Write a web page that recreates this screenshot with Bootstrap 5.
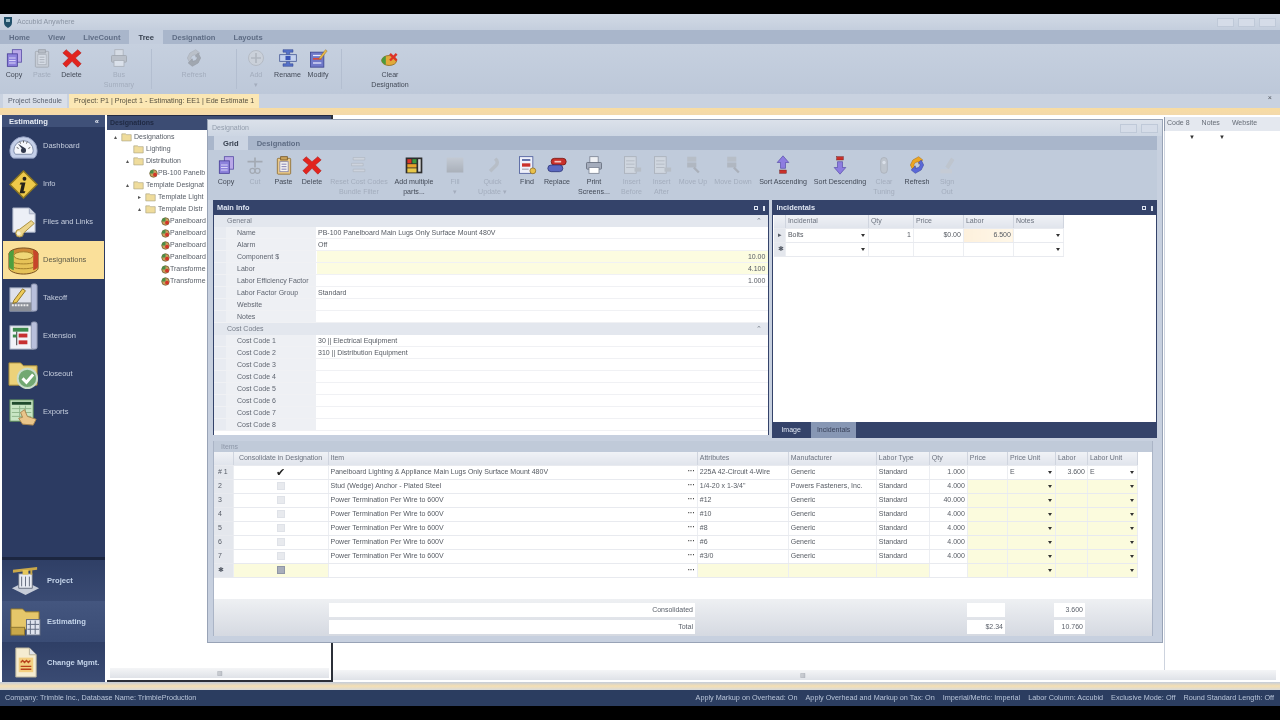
<!DOCTYPE html>
<html lang="en">
<head>
<meta charset="UTF-8">
<title>Accubid Anywhere</title>
<link href="https://cdn.jsdelivr.net/npm/bootstrap@5.3.0/dist/css/bootstrap.min.css" rel="stylesheet">
<style>
  html, body { height: 720px; overflow: hidden; background: #000; }
  body { font-family: "Liberation Sans", Arial, sans-serif; font-size: 7px; line-height: 12px; color: #51565e; }
  .app { margin-top: 14px; height: 692px; display: flex; flex-direction: column; background: #c3cddd; filter: blur(.4px); }
  .ttl-bar { height: 16px; flex: none; background: linear-gradient(#d2dae6, #c4cedd); padding-left: 3px; color: #8a94a3; }
  .ttl-bar svg { width: 10px; height: 12px; }
  .win-ctl { width: 17px; height: 9px; background: #d5dce8; border: 1px solid #bfc9d8; }
  .rb-tabs { height: 14px; flex: none; background: #a9b6cb; padding-left: 0; }
  .rb-tab { height: 14px; padding: 0 9px; font-weight: 700; font-size: 7.6px; color: #5f6d85; line-height: 15px; }
  .rb-tab.on { background: #c3cddd; color: #37404f; }
  .ribbon { height: 50px; flex: none; background: linear-gradient(#c6d0df, #bdc8d9); }
  .tb-btn { flex: none; display: flex; flex-direction: column; align-items: center; padding: 4px 0 0; border: 0; border-radius: 0; font-size: 7.1px; line-height: 9.5px; color: #434a57; text-align: center; background: none; white-space: nowrap; }
  .tb-btn svg { width: 20px; height: 20px; margin-bottom: 3px; flex: none; }
  .tb-btn.off { color: #a3adbd; }
  .tb-btn.off svg { filter: grayscale(1) opacity(.4); }
  .tb-sep { width: 1px; height: 40px; margin-top: 5px; background: #b3bed0; flex: none; }
  .w28 { width: 28px; } .w30 { width: 30px; } .w31 { width: 31px; } .w27 { width: 27px; } .w22 { width: 22px; }
  .w34 { width: 34px; } .w36 { width: 36px; } .w39 { width: 39px; } .w44 { width: 44px; } .w46 { width: 46px; }
  .w54 { width: 54px; } .w60 { width: 60px; } .w64 { width: 64px; } .w38 { width: 38px; } .w29 { width: 29px; }
  .w84 { width: 84px; } .w25 { width: 25px; } .w96 { width: 96px; }
  .tb-sep.far { margin-left: 5px; }
  .doc-tabs { height: 14px; flex: none; background: #c9d2e0; padding-left: 3px; gap: 2px; font-size: 7.15px; }
  .doc-tab { padding: 0 5px; height: 14px; line-height: 14px; background: #d9dfe9; color: #596170; }
  .doc-tab.on { background: #fbe7b4; color: #565140; }
  .band-top { height: 7px; flex: none; background: linear-gradient(#f8dca2, #f3d9ab); }
  .band-bot { height: 8px; flex: none; background: linear-gradient(#c4cddb, #f5dfb2 50%, #d8dadb); }
  .stage { position: relative; height: 567px; flex: none; display: flex; background: #fff; overflow: hidden; }
  .side { width: 103px; flex: none; margin-left: 2px; margin-right: 2px; background: #2c3b62; display: flex; flex-direction: column; color: #cfd6e4; margin-bottom: -1px; }
  .side-hd { height: 12px; flex: none; background: #3f5078; color: #e6ebf4; font-weight: 700; font-size: 7.6px; padding: 0 6px 0 7px; line-height: 13px; }
  .side-it { height: 38px; flex: none; display: flex; align-items: center; padding-left: 5px; gap: 4px; font-size: 7.5px; color: #c5cddd; margin: 0 1px; }
  .side-it svg { width: 31px; height: 31px; flex: none; }
  .side-it.on { background: #fae09a; color: #5c5a48; }
  .side-big { height: 41px; flex: none; display: flex; align-items: center; padding-left: 8px; gap: 6px; font-weight: 700; font-size: 7.6px; color: #c4d4ea; background: linear-gradient(#2f3f66, #3a4b73); }
  .side-big.on { background: linear-gradient(#44567f, #3a4c75); }
  .side-big svg { width: 31px; height: 31px; flex: none; }
  .side-sep { height: 3px; flex: none; background: #1c2640; }
  .tree-pane { width: 226px; flex: none; display: flex; flex-direction: column; border-right: 2px solid #2b2f38; border-bottom: 2px solid #2b2f38; height: 567px; }
  .tree-hd { height: 15px; flex: none; background: #3c4c73; border-top: 1px solid #232b44; color: #1f2942; font-weight: 700; padding-left: 3px; line-height: 14px; }
  .tree-body { flex: 1; padding-top: 1px; width: 100px; overflow: hidden; white-space: nowrap; }
  .tree-row { height: 12px; display: flex; align-items: center; color: #5a6069; }
  .tree-row svg { width: 11px; height: 10px; margin-right: 2px; flex: none; }
  .tree-row svg.ptc { width: 9px; height: 9px; margin-right: 0; }
  .tw { width: 7px; flex: none; font-size: 6px; color: #555; }
  .ind0 { padding-left: 7px; } .ind1 { padding-left: 19px; } .ind2 { padding-left: 31px; } .ind3 { padding-left: 35px; } .ind4 { padding-left: 47px; }
  .hscroll { height: 10px; flex: none; background: linear-gradient(#f4f5f7, #dfe2e8); margin: 0 2px 2px 3px; text-align: center; color: #8a8f99; font-size: 6px; line-height: 10px; }
  .back-grid { flex: 1; display: flex; flex-direction: column; justify-content: space-between; }
  .back-grid .hscroll { margin: 0 4px 2px 0; padding-right: 4px; }
  .back-hd { margin-left: 831px; height: 14px; margin-top: 2px; background: #e4e8ef; display: flex; color: #666c76; border-left: 1px solid #8f99ab; line-height: 12px; }
  .back-hd span { padding-left: 2px; margin-right: 10px; }
  .back-row { margin-left: 831px; flex: 1; position: relative; border-left: 1px solid #cdd3de; color: #333; font-size: 6px; }
  .back-ar { position: absolute; top: 0; }
  .ar-a { left: 24px; } .ar-b { left: 54px; }
  .dlg { position: absolute; left: 207px; top: 4px; width: 956px; height: 524px; background: #c7d0df; border: 1px solid #98a3b6; display: flex; flex-direction: column; padding-right: 5px; }
  .dlg-ttl { height: 16px; flex: none; color: #939dac; background: linear-gradient(#dbe1ea, #cdd6e3); padding-left: 4px; line-height: 15px; margin-right: -5px; }
  .dlg-tabs { height: 14px; flex: none; background: #a9b6cb; padding-left: 6px; }
  .dlg-tabs .rb-tab.on { background: #cbd4e2; color: #37404f; }
  .dlg-tb { height: 50px; flex: none; padding: 1px 0 0 4px; background: #c0cbdb; }
  .panels { height: 238px; flex: none; display: flex; gap: 3px; padding-left: 5px; }
  .pn { background: #34436a; padding: 1px 1px 0; display: flex; flex-direction: column; }
  .pn-main { width: 557px; height: 235px; }
  .pn-inc { width: 385px; height: 238px; }
  .pn-hd { height: 14px; flex: none; display: flex; align-items: center; justify-content: space-between; font-weight: 700; font-size: 7.4px; color: #dfe6f2; padding: 0 3px; }
  .pn-ctl { display: flex; gap: 5px; align-items: center; }
  .pn-ctl i { display: block; width: 4px; height: 4px; border: 1px solid #dfe6f2; }
  .pn-ctl b { display: block; width: 2px; height: 5px; background: #dfe6f2; }
  .pn-body { flex: 1; background: #fff; overflow: hidden; }
  .pg-band { height: 12px; background: #e3e7ee; color: #757c88; padding-left: 13px; display: flex; justify-content: space-between; padding-right: 6px; }
  .pg-row { display: flex; height: 12px; border-bottom: 1px solid #f0f1f4; }
  .pg-lb { width: 102px; flex: none; padding-left: 11px; border-left: 12px solid #e8ebf1; background: #eef0f4; color: #5f6570; margin-right: 1px; white-space: nowrap; }
  .pg-v { flex: 1; padding: 0 3px 0 1px; display: flex; justify-content: space-between; color: #565b63; }
  .pg-y { background: #fcfce0; }
  .inc-wrap { flex: 1; background: #fff; }
  .tab-foot { height: 16px; flex: none; display: flex; gap: 4px; color: #dfe6f2; padding-left: 2px; align-items: stretch; line-height: 16px; }
  .tab-foot span { padding: 0 6px; }
  .tab-foot .on { background: #8797b4; color: #39425a; }
  .gt { table-layout: fixed; border-collapse: collapse; margin: 0; width: auto; }
  .gt th, .gt td { padding: 0 2px; height: 14px; font-weight: 400; color: #565b63; font-size: 7px; line-height: 12px; border: 0; border-right: 1px solid #eceef2; border-bottom: 1px solid #e8eaef; white-space: nowrap; overflow: hidden; vertical-align: middle; }
  .gt th { height: 13px; background: linear-gradient(#f0f2f6, #e0e4ec); color: #6d7480; border-right-color: #d0d5df; }
  .gt td.rh { background: #e4e7ed; color: #555b66; padding-left: 4px; }
  .gt td.yl { background: #fbfbdd; }
  .gt td.num { text-align: right; }
  .gt td.drop { position: relative; }
  .gt td.drop::after { content: ""; position: absolute; right: 3px; top: 5px; border: 2.5px solid transparent; border-top: 3px solid #333; border-bottom: 0; }
  .dots { float: right; font-weight: 700; color: #444; line-height: 10px; }
  .inc-tb { width: 289px; margin-left: 1px; }
  .inc-tb col:nth-child(1) { width: 11px; } .inc-tb col:nth-child(2) { width: 83px; }
  .inc-tb col:nth-child(3) { width: 45px; } .inc-tb col:nth-child(4) { width: 50px; }
  .inc-tb col:nth-child(5) { width: 50px; } .inc-tb col:nth-child(6) { width: 50px; }
  .gt td.lab-hot { background: linear-gradient(90deg, #fdf0dc, #fff7e8); }
  .items { flex: 1; margin: 3px 4px 6px 5px; display: flex; flex-direction: column; background: #fff; border: 1px solid #aab4c6; border-top: 0; border-bottom: 0; }
  .items-hd { height: 11px; flex: none; background: #c0cad9; color: #8d97a8; padding-left: 7px; line-height: 11px; }
  .it-tb { width: 924px; }
  .it-tb col:nth-child(1) { width: 19px; } .it-tb col:nth-child(2) { width: 95px; } .it-tb col:nth-child(3) { width: 369px; }
  .it-tb col:nth-child(4) { width: 91px; } .it-tb col:nth-child(5) { width: 88px; } .it-tb col:nth-child(6) { width: 53px; }
  .it-tb col:nth-child(7) { width: 38px; } .it-tb col:nth-child(8) { width: 40px; } .it-tb col:nth-child(9) { width: 48px; }
  .it-tb col:nth-child(10) { width: 32px; } .it-tb col:nth-child(11) { width: 50px; }
  .cbx { display: block; width: 8px; height: 8px; margin: 0 auto; background: #e8eaee; border: 1px solid #dfe2e8; }
  .cbx.dark { background: #a8aebb; border-color: #8f96a6; }
  .gt td.chk { text-align: center; color: #222; font-size: 11px; line-height: 11px; }
  .grid-gap { flex: 1; }
  .sumry { height: 37px; flex: none; background: linear-gradient(#eef0f3, #d5d9e1); padding-top: 4px; display: flex; flex-direction: column; gap: 3px; }
  .sum-row { height: 14px; display: flex; color: #5b616b; }
  .sum-lbl { margin-left: 115px; width: 366px; background: #fff; text-align: right; padding-right: 2px; line-height: 14px; }
  .sum-pr { margin-left: 272px; width: 38px; background: #fff; text-align: right; padding-right: 2px; line-height: 14px; }
  .sum-lb { margin-left: 49px; width: 31px; background: #fff; text-align: right; padding-right: 2px; line-height: 14px; }
  .status { height: 16px; flex: none; background: #2b3d60; color: #b8c4d8; padding: 0 6px 0 5px; line-height: 15px; font-size: 7.25px; }
  .status-r { gap: 8px; }
</style>
</head>
<body>
<svg width="0" height="0" class="position-absolute">
  <symbol id="i-copy" viewBox="0 0 24 24"><rect x="10" y="2" width="11" height="15" fill="#b9a8e8" stroke="#5b50a8"/><rect x="4" y="7" width="12" height="15" fill="#8d82dc" stroke="#483f98"/><path d="M6 12h8M6 15h8M6 18h8" stroke="#e8e4ff"/></symbol>
  <symbol id="i-paste" viewBox="0 0 24 24"><rect x="4" y="4" width="16" height="19" rx="1" fill="#e9c98a" stroke="#8c6a30"/><rect x="8" y="2" width="8" height="4" fill="#c9a25a" stroke="#7a5a28"/><rect x="7" y="8" width="10" height="12" fill="#f6f4f0" stroke="#8886a8"/><path d="M9 11h6M9 14h6M9 17h6" stroke="#6a68a8"/></symbol>
  <symbol id="i-del" viewBox="0 0 24 24"><path d="M5 2l7 6 7-6 4 4-7 6 7 7-4 4-7-7-7 7-4-4 7-7-7-6z" fill="#e2241e" stroke="#a81612" stroke-width=".6"/></symbol>
  <symbol id="i-print" viewBox="0 0 24 24"><rect x="7" y="2" width="10" height="8" fill="#eef0f4" stroke="#7c8494"/><rect x="3" y="9" width="18" height="8" rx="1" fill="#a4acbc" stroke="#646c7c"/><rect x="6" y="15" width="12" height="7" fill="#fff" stroke="#7c8494"/></symbol>
  <symbol id="i-refresh" viewBox="0 0 24 24"><path d="M14 2L7 6l-3 6 3 6 3-3-2-3 2-3 4-1v3l5-5z" fill="#eda520" stroke="#a86c10" stroke-width=".6"/><path d="M10 22l7-4 3-6-3-6-3 3 2 3-2 3-4 1v-3l-5 5z" fill="#5a68d8" stroke="#333f98" stroke-width=".6"/></symbol>
  <symbol id="i-add" viewBox="0 0 24 24"><circle cx="12" cy="12" r="9" fill="#d0d4dc" stroke="#8d94a2"/><path d="M12 6v12M6 12h12" stroke="#8d94a2" stroke-width="2"/></symbol>
  <symbol id="i-rename" viewBox="0 0 24 24"><path d="M6 2h12v3h-4v14h4v3H6v-3h4V5H6z" fill="#5571c8" stroke="#2d3f8a" stroke-width=".6"/><rect x="2" y="8" width="20" height="8" fill="#c4d2ee" stroke="#4a5c98"/><rect x="9" y="9.5" width="6" height="5" fill="#3a55b8"/></symbol>
  <symbol id="i-modify" viewBox="0 0 24 24"><rect x="3" y="5" width="16" height="18" fill="#6f78c8" stroke="#3d4590"/><path d="M6 9h10" stroke="#e8eaff" stroke-width="1.5"/><path d="M6 13h10" stroke="#d84a3a" stroke-width="2"/><path d="M6 18h10" stroke="#e8eaff" stroke-width="1.5"/><path d="M14 11l7-9 2 1.5-7 9-3 1z" fill="#e9b84a" stroke="#8a6a20" stroke-width=".5"/></symbol>
  <symbol id="i-clear" viewBox="0 0 24 24"><ellipse cx="11" cy="15" rx="9" ry="6" fill="#e2a93a" stroke="#8c6a20"/><path d="M2 15c0-3 3-5 5-5v10c-3-1-5-3-5-5z" fill="#4c9a3c"/><path d="M13 6l3 3 3-3 2 2-3 3 3 3-2 2-3-3-3 3-2-2 3-3-3-3z" fill="#dd3328"/></symbol>
  <symbol id="i-cut" viewBox="0 0 24 24"><path d="M12 3v12M3 8h18" stroke="#777" stroke-width="2"/><circle cx="9" cy="19" r="3" fill="none" stroke="#777" stroke-width="1.5"/><circle cx="15" cy="19" r="3" fill="none" stroke="#777" stroke-width="1.5"/></symbol>
  <symbol id="i-reset" viewBox="0 0 24 24"><path d="M5 3h14v3H5zM3 10h14v3H3zM5 17h14v3H5z" fill="#dde0e6" stroke="#777" stroke-width=".5"/></symbol>
  <symbol id="i-parts" viewBox="0 0 24 24"><rect x="2" y="3" width="20" height="19" fill="#2d2d2d"/><rect x="4" y="5" width="5" height="5" fill="#d9342a"/><rect x="10" y="5" width="5" height="5" fill="#3d9a3d"/><rect x="4" y="11" width="11" height="4" fill="#e8a42a"/><rect x="4" y="16" width="11" height="5" fill="#e8c84a"/><rect x="17" y="5" width="3" height="15" fill="#d8d8d8"/></symbol>
  <symbol id="i-fill" viewBox="0 0 24 24"><defs><linearGradient id="gf" x1="0" y1="0" x2="0" y2="1"><stop offset="0" stop-color="#c6c8cc"/><stop offset="1" stop-color="#84888e"/></linearGradient></defs><rect x="2" y="3" width="20" height="18" fill="url(#gf)"/></symbol>
  <symbol id="i-quick" viewBox="0 0 24 24"><path d="M16 3a7 7 0 0 1 1 11l-7 7-3-3 7-7a3 3 0 0 0-1-5z" fill="#aaa"/></symbol>
  <symbol id="i-find" viewBox="0 0 24 24"><rect x="3" y="2" width="16" height="20" fill="#eef0fa" stroke="#4a5a9a"/><path d="M6 6h10" stroke="#4a5a9a" stroke-width="2"/><rect x="6" y="10" width="10" height="4" fill="#c9302a"/><path d="M6 17h8" stroke="#889"/><circle cx="19" cy="19" r="3.5" fill="#e8c04a" stroke="#96752a"/></symbol>
  <symbol id="i-replace" viewBox="0 0 24 24"><rect x="5" y="4" width="18" height="8" rx="4" fill="#c9302a" stroke="#7a1a16"/><rect x="1" y="12" width="18" height="8" rx="4" fill="#5a68c0" stroke="#30387c"/><rect x="9" y="7" width="8" height="2" fill="#f4c4c0"/></symbol>
  <symbol id="i-ins" viewBox="0 0 24 24"><rect x="3" y="2" width="14" height="20" fill="#e6e6e0" stroke="#888"/><path d="M5 7h10M5 11h10M5 15h10" stroke="#999"/><path d="M15 15h8v5h-8z" fill="#aaa"/></symbol>
  <symbol id="i-move" viewBox="0 0 24 24"><rect x="5" y="2" width="11" height="6" fill="#aaa"/><rect x="5" y="9" width="11" height="6" fill="#999"/><path d="M14 14l6 6-2 2-6-6z" fill="#888"/></symbol>
  <symbol id="i-asc" viewBox="0 0 24 24"><path d="M12 1l7 8h-4v7H9V9H5z" fill="#8d7de0" stroke="#4a3fa0" stroke-width=".7"/><rect x="8" y="18" width="8" height="4" fill="#c9302a" stroke="#6a1a18" stroke-width=".5"/></symbol>
  <symbol id="i-desc" viewBox="0 0 24 24"><path d="M12 23l7-8h-4V8H9v7H5z" fill="#8d7de0" stroke="#4a3fa0" stroke-width=".7"/><rect x="8" y="2" width="8" height="4" fill="#c9302a" stroke="#6a1a18" stroke-width=".5"/></symbol>
  <symbol id="i-tune" viewBox="0 0 24 24"><rect x="8" y="3" width="8" height="19" rx="4" fill="#bbb" stroke="#888"/><circle cx="12" cy="9" r="2" fill="#fff"/></symbol>
  <symbol id="i-sign" viewBox="0 0 24 24"><path d="M10 14l7-11 4 3-7 11z" fill="#bbb"/><rect x="4" y="17" width="14" height="5" fill="#ccc"/></symbol>
  <symbol id="i-dash" viewBox="0 0 32 32"><path d="M2 20a14 14 0 0 1 28 0c0 5-2 8-4 8H6c-2 0-4-3-4-8z" fill="#c4cfe8" stroke="#8e9bbd"/><path d="M6 20a10 10 0 0 1 20 0c0 2-1 4-2 4H8c-1 0-2-2-2-4z" fill="#f4f6fb" stroke="#7d8aa8"/><path d="M16 20l-6-7 8 5z" fill="#30384c"/><circle cx="16" cy="20" r="2.6" fill="#30384c"/><path d="M9 17l2 1M16 10v2M23 17l-2 1M12 11l1 2M20 11l-1 2" stroke="#555"/></symbol>
  <symbol id="i-info" viewBox="0 0 32 32"><path d="M16 2l14 14-14 14L2 16z" fill="#eec94a" stroke="#8a7520" stroke-width="1.5"/><path d="M17 8a2 2 0 1 1 0 4 2 2 0 0 1 0-4zM13 14h5l-2 9h2l-1 2h-5l2-9h-2z" fill="#26221a"/></symbol>
  <symbol id="i-files" viewBox="0 0 32 32"><path d="M5 1h17l6 6v19H5z" fill="#eceff6" stroke="#a8b1c4"/><path d="M22 1v6h6" fill="#cfd6e4" stroke="#a8b1c4"/><path d="M24 14l-12 9a4 4 0 1 0 4 4l11-10z" fill="#ecd58c" stroke="#a78d3e"/><circle cx="11" cy="27" r="2" fill="#f6f1d8"/></symbol>
  <symbol id="i-desig" viewBox="0 0 32 32"><ellipse cx="16" cy="9" rx="15" ry="6" fill="#cf8a38" stroke="#74491a"/><path d="M1 9v15c0 3 7 6 15 6s15-3 15-6V9" fill="#e6c258" stroke="#74491a"/><path d="M1 9c0-2 3-3 5-4v21c-3-1-5-2-5-4z" fill="#4f9f3f"/><path d="M31 9c0-2-3-3-5-4v21c3-1 5-2 5-4z" fill="#c6452a"/><ellipse cx="16" cy="11" rx="10" ry="4" fill="#f0d878" stroke="#a37e2a"/><path d="M6 18c2 2 18 2 20 0M6 23c2 2 18 2 20 0" stroke="#a37e2a" fill="none"/></symbol>
  <symbol id="i-takeoff" viewBox="0 0 32 32"><rect x="2" y="5" width="24" height="24" fill="#dfe2ec" stroke="#9ca5bb"/><rect x="24" y="1" width="6" height="28" rx="2" fill="#b8bfdb" stroke="#8f97b0"/><path d="M2 20h22v9H2z" fill="#8b8f98"/><path d="M4 23h18" stroke="#eee" stroke-dasharray="2 1" stroke-width="2"/><path d="M6 18l9-12 3 2-9 12-4 1z" fill="#eecb5a" stroke="#8c7324"/></symbol>
  <symbol id="i-ext" viewBox="0 0 32 32"><rect x="2" y="5" width="24" height="24" fill="#f2f3f7" stroke="#9ca5bb"/><rect x="24" y="1" width="6" height="28" rx="2" fill="#b8bfdb" stroke="#8f97b0"/><rect x="5" y="7" width="16" height="4" fill="#3d8a4c"/><path d="M9 11v14" stroke="#333"/><rect x="11" y="13" width="9" height="4" fill="#c73030"/><rect x="11" y="20" width="9" height="4" fill="#c73030"/><rect x="5" y="14" width="4" height="3" fill="#3d8a4c"/></symbol>
  <symbol id="i-close" viewBox="0 0 32 32"><path d="M1 4h12l3 3h14v20H1z" fill="#ecd27a" stroke="#a88d3a"/><circle cx="20" cy="20" r="10" fill="#72a872" stroke="#c9dcc9" stroke-width="2"/><path d="M15 20l4 4 7-8" stroke="#fff" stroke-width="3" fill="none"/></symbol>
  <symbol id="i-export" viewBox="0 0 32 32"><rect x="2" y="3" width="24" height="22" fill="#c9e6c4" stroke="#5b8a58"/><rect x="4" y="5" width="20" height="3" fill="#1f4a2c"/><path d="M4 12h20M4 16h20M4 20h20M12 9v15M18 9v15" stroke="#8fb58b"/><path d="M13 16l4-3 3 7 9 3-3 6-11-1-4-6 4-1z" fill="#eac58a" stroke="#a88550"/></symbol>
  <symbol id="i-proj" viewBox="0 0 32 32"><path d="M2 24l14-7 14 7-14 7z" fill="#c6ccd8"/><path d="M9 9h14v15H9z" fill="#e8ebf2" stroke="#646c7e"/><path d="M12 12v10M16 12v10M20 12v10" stroke="#646c7e"/><path d="M3 5l25-3v3L3 8z" fill="#c9a84a"/><path d="M22 4v6" stroke="#c9a84a" stroke-width="2"/><rect x="13" y="5" width="6" height="5" fill="#e7c75a"/></symbol>
  <symbol id="i-est" viewBox="0 0 32 32"><path d="M1 3h12l3 3h14v18H1z" fill="#e6c76a" stroke="#8e7630"/><rect x="1" y="22" width="14" height="8" fill="#c9a84a" stroke="#8e7630"/><rect x="17" y="14" width="14" height="16" fill="#dfe3ee" stroke="#616a80"/><path d="M21 15v14M26 15v14M18 19h12M18 24h12" stroke="#616a80"/></symbol>
  <symbol id="i-chg" viewBox="0 0 32 32"><path d="M6 1h14l7 7v23H6z" fill="#f5ecd0" stroke="#b8b19a"/><path d="M20 1v7h7" fill="#e0e3ea" stroke="#b8b19a"/><rect x="9" y="11" width="15" height="15" fill="#f3cf80"/><path d="M11 16l2-2 2 2 2-2 2 2 2-2M11 20h11M11 23h11" stroke="#b8431c" stroke-width="1.4" fill="none"/></symbol>
  <symbol id="i-fold" viewBox="0 0 14 12"><path d="M1 2h5l1 1h6v8H1z" fill="#efdc9c" stroke="#a8a284" stroke-width=".8"/></symbol>
  <symbol id="i-part" viewBox="0 0 12 12"><circle cx="6" cy="6" r="5" fill="#c6a15a" stroke="#6e5a34"/><path d="M1 6a5 5 0 0 1 5-5v5z" fill="#4c8d48"/><circle cx="8" cy="7.5" r="2.6" fill="#d3352a"/></symbol>
  <symbol id="i-logo" viewBox="0 0 10 12"><path d="M1 1h8v6c0 2-2 4-4 5-2-1-4-3-4-5z" fill="#21506a"/><path d="M3 3h4v3H3z" fill="#9fc0cc"/></symbol>
</svg>

<div class="app">
  <div class="ttl-bar d-flex align-items-center justify-content-between">
    <span class="d-flex align-items-center gap-1"><svg><use href="#i-logo"/></svg>Accubid Anywhere</span>
    <span class="d-flex gap-1 pe-1"><span class="win-ctl"></span><span class="win-ctl"></span><span class="win-ctl"></span></span>
  </div>
  <div class="nav rb-tabs flex-nowrap">
    <span class="rb-tab">Home</span><span class="rb-tab">View</span><span class="rb-tab">LiveCount</span><span class="rb-tab on">Tree</span><span class="rb-tab">Designation</span><span class="rb-tab">Layouts</span>
  </div>
  <div class="ribbon d-flex">
    <button class="btn tb-btn w28"><svg><use href="#i-copy"/></svg>Copy</button>
    <button class="btn tb-btn off w28"><svg><use href="#i-paste"/></svg>Paste</button>
    <button class="btn tb-btn w31"><svg><use href="#i-del"/></svg>Delete</button>
    <button class="btn tb-btn off w64"><svg><use href="#i-print"/></svg>Bus<br>Summary</button>
    <span class="tb-sep"></span>
    <button class="btn tb-btn off w84"><svg><use href="#i-refresh"/></svg>Refresh</button>
    <span class="tb-sep"></span>
    <button class="btn tb-btn off w38"><svg><use href="#i-add"/></svg>Add<br>▾</button>
    <button class="btn tb-btn w25"><svg><use href="#i-rename"/></svg>Rename</button>
    <button class="btn tb-btn w36"><svg><use href="#i-modify"/></svg>Modify</button>
    <span class="tb-sep far"></span>
    <button class="btn tb-btn w96"><svg><use href="#i-clear"/></svg>Clear<br>Designation</button>
  </div>
  <div class="doc-tabs d-flex">
    <span class="doc-tab">Project Schedule</span>
    <span class="doc-tab on">Project: P1 | Project 1 - Estimating: EE1 | Ede Estimate 1</span>
    <span class="ms-auto pe-2 lh-sm">×</span>
  </div>
  <div class="band-top"></div>

  <div class="stage">
    <div class="side">
      <div class="side-hd d-flex justify-content-between"><span>Estimating</span><span>«</span></div>
      <div class="side-it"><svg><use href="#i-dash"/></svg>Dashboard</div>
      <div class="side-it"><svg><use href="#i-info"/></svg>Info</div>
      <div class="side-it"><svg><use href="#i-files"/></svg>Files and Links</div>
      <div class="side-it on"><svg><use href="#i-desig"/></svg>Designations</div>
      <div class="side-it"><svg><use href="#i-takeoff"/></svg>Takeoff</div>
      <div class="side-it"><svg><use href="#i-ext"/></svg>Extension</div>
      <div class="side-it"><svg><use href="#i-close"/></svg>Closeout</div>
      <div class="side-it"><svg><use href="#i-export"/></svg>Exports</div>
      <div class="side-sep mt-auto"></div>
      <div class="side-big"><svg><use href="#i-proj"/></svg>Project</div>
      <div class="side-big on"><svg><use href="#i-est"/></svg>Estimating</div>
      <div class="side-big"><svg><use href="#i-chg"/></svg>Change Mgmt.</div>
    </div>

    <div class="tree-pane">
      <div class="tree-hd">Designations</div>
      <div class="tree-body" id="tree"></div>
      <div class="hscroll">▥</div>
    </div>

    <div class="back-grid">
      <div class="back-hd"><span>Code 8</span><span>Notes</span><span>Website</span></div>
      <div class="back-row"><span class="back-ar ar-a">▼</span><span class="back-ar ar-b">▼</span></div>
      <div class="hscroll">▥</div>
    </div>

    <div class="dlg">
      <div class="dlg-ttl d-flex justify-content-between"><span>Designation</span><span class="d-flex gap-1 pe-1 pt-1"><span class="win-ctl"></span><span class="win-ctl"></span></span></div>
      <div class="nav dlg-tabs flex-nowrap justify-content-start">
        <span class="rb-tab on">Grid</span><span class="rb-tab">Designation</span>
      </div>
      <div class="dlg-tb d-flex" id="dlgTools"></div>
      <div class="panels">
        <div class="pn pn-main">
          <div class="pn-hd"><span>Main Info</span><span class="pn-ctl"><i></i><b></b></span></div>
          <div class="pn-body" id="props"></div>
        </div>
        <div class="pn pn-inc">
          <div class="pn-hd"><span>Incidentals</span><span class="pn-ctl"><i></i><b></b></span></div>
          <div class="inc-wrap">
            <table class="table gt inc-tb">
              <colgroup><col><col><col><col><col><col></colgroup>
              <tr><th></th><th>Incidental</th><th>Qty</th><th>Price</th><th>Labor</th><th>Notes</th></tr>
              <tr><td class="rh">▸</td><td class="drop">Bolts</td><td class="num">1</td><td class="num">$0.00</td><td class="num lab-hot">6.500</td><td class="drop"></td></tr>
              <tr><td class="rh">✱</td><td class="drop"></td><td></td><td></td><td></td><td class="drop"></td></tr>
            </table>
          </div>
          <div class="tab-foot"><span>Image</span><span class="on">Incidentals</span></div>
        </div>
      </div>
      <div class="items">
        <div class="items-hd">Items</div>
        <table class="table gt it-tb" id="itemsTb">
          <colgroup><col><col><col><col><col><col><col><col><col><col><col></colgroup>
        </table>
        <div class="grid-gap"></div>
        <div class="sumry">
          <div class="sum-row"><span class="sum-lbl">Consolidated</span><span class="sum-pr"></span><span class="sum-lb">3.600</span></div>
          <div class="sum-row"><span class="sum-lbl">Total</span><span class="sum-pr">$2.34</span><span class="sum-lb">10.760</span></div>
        </div>
      </div>
    </div>
  </div>

  <div class="band-bot"></div>
  <div class="status d-flex justify-content-between">
    <span>Company: Trimble Inc., Database Name: TrimbleProduction</span>
    <span class="status-r d-flex">
      <span>Apply Markup on Overhead: On</span><span>Apply Overhead and Markup on Tax: On</span><span>Imperial/Metric: Imperial</span><span>Labor Column: Accubid</span><span>Exclusive Mode: Off</span><span>Round Standard Length: Off</span>
    </span>
  </div>
</div>

<script>
// tree on the left, names cut where the designation window covers them
const tree = [
  [0, "▴", "i-fold", "Designations"], [1, "", "i-fold", "Lighting"], [1, "▴", "i-fold", "Distribution"],
  [3, "", "i-part", "PB-100 Panelb"], [1, "▴", "i-fold", "Template Designat"],
  [2, "▸", "i-fold", "Template Light"], [2, "▴", "i-fold", "Template Distr"],
  [4, "", "i-part", "Panelboard"], [4, "", "i-part", "Panelboard"], [4, "", "i-part", "Panelboard"],
  [4, "", "i-part", "Panelboard"], [4, "", "i-part", "Transforme"], [4, "", "i-part", "Transforme"]
];
document.getElementById("tree").innerHTML = tree.map(t =>
  `<div class="tree-row ind${t[0]}"><span class="tw">${t[1]}</span><svg class="${t[2] === "i-part" ? "ptc" : ""}"><use href="#${t[2]}"/></svg>${t[3]}</div>`).join("");

// designation window toolbar
const tools = [
  ["w28", "i-copy", "Copy", 0], ["w30", "i-cut", "Cut", 1], ["w27", "i-paste", "Paste", 0], ["w30", "i-del", "Delete", 0],
  ["w64", "i-reset", "Reset Cost Codes<br>Bundle Filter", 1], ["w46", "i-parts", "Add multiple<br>parts...", 0],
  ["w36", "i-fill", "Fill<br>▾", 1], ["w39", "i-quick", "Quick<br>Update ▾", 1], ["w30", "i-find", "Find", 0],
  ["w30", "i-replace", "Replace", 0], ["w44", "i-print", "Print<br>Screens...", 0], ["w31", "i-ins", "Insert<br>Before", 1],
  ["w29", "i-ins", "Insert<br>After", 1], ["w34", "i-move", "Move Up", 1], ["w46", "i-move", "Move Down", 1],
  ["w54", "i-asc", "Sort Ascending", 0], ["w60", "i-desc", "Sort Descending", 0], ["w28", "i-tune", "Clear<br>Tuning", 1],
  ["w38", "i-refresh", "Refresh", 0], ["w22", "i-sign", "Sign<br>Out", 1]
];
document.getElementById("dlgTools").innerHTML = tools.map(t =>
  `<button class="btn tb-btn ${t[0]} ${t[3] ? "off" : ""}"><svg><use href="#${t[1]}"/></svg>${t[2]}</button>`).join("");

// property grid
const pgRow = (l, v, y, r) => `<div class="pg-row"><span class="pg-lb">${l}</span><span class="pg-v ${y ? "pg-y" : ""}"><span>${v}</span><span>${r || ""}</span></span></div>`;
let html = `<div class="pg-band"><span>General</span><span>⌃</span></div>`;
html += pgRow("Name", "PB-100 Panelboard Main Lugs Only Surface Mount 480V");
html += pgRow("Alarm", "Off");
html += pgRow("Component $", "", 1, "10.00");
html += pgRow("Labor", "", 1, "4.100");
html += pgRow("Labor Efficiency Factor", "", 0, "1.000");
html += pgRow("Labor Factor Group", "Standard");
html += pgRow("Website", "");
html += pgRow("Notes", "");
html += `<div class="pg-band"><span>Cost Codes</span><span>⌃</span></div>`;
const codes = ["30 || Electrical Equipment", "310 || Distribution Equipment", "", "", "", "", "", ""];
codes.forEach((c, i) => { html += pgRow("Cost Code " + (i + 1), c); });
document.getElementById("props").innerHTML = html;

// items grid
const items = [
  ["Panelboard Lighting &amp; Appliance Main Lugs Only Surface Mount 480V", "225A 42-Circuit 4-Wire", "Generic", "1.000"],
  ["Stud (Wedge) Anchor - Plated Steel", "1/4-20 x 1-3/4\"", "Powers Fasteners, Inc.", "4.000"],
  ["Power Termination Per Wire to 600V", "#12", "Generic", "40.000"],
  ["Power Termination Per Wire to 600V", "#10", "Generic", "4.000"],
  ["Power Termination Per Wire to 600V", "#8", "Generic", "4.000"],
  ["Power Termination Per Wire to 600V", "#6", "Generic", "4.000"],
  ["Power Termination Per Wire to 600V", "#3/0", "Generic", "4.000"]
];
let rows = `<tr><th></th><th class="text-center">Consolidate in Designation</th><th>Item</th><th>Attributes</th><th>Manufacturer</th><th>Labor Type</th><th>Qty</th><th>Price</th><th>Price Unit</th><th>Labor</th><th>Labor Unit</th></tr>`;
items.forEach((it, i) => {
  const first = i === 0;
  rows += `<tr><td class="rh">${first ? "# 1" : i + 1}</td>
    <td class="${first ? "chk" : ""}">${first ? "✔" : '<span class="cbx"></span>'}</td>
    <td>${it[0]}<span class="dots">···</span></td><td>${it[1]}</td><td>${it[2]}</td><td>Standard</td><td class="num">${it[3]}</td>
    <td class="${first ? "" : "yl"}"></td><td class="drop ${first ? "" : "yl"}">${first ? "E" : ""}</td>
    <td class="num ${first ? "" : "yl"}">${first ? "3.600" : ""}</td><td class="drop ${first ? "" : "yl"}">${first ? "E" : ""}</td></tr>`;
});
rows += `<tr><td class="rh">✱</td><td class="yl"><span class="cbx dark"></span></td><td><span class="dots">···</span></td>
  <td class="yl"></td><td class="yl"></td><td class="yl"></td><td></td><td class="yl"></td><td class="drop yl"></td><td class="yl"></td><td class="drop yl"></td></tr>`;
document.getElementById("itemsTb").insertAdjacentHTML("beforeend", rows);
</script>
<script src="https://cdn.jsdelivr.net/npm/bootstrap@5.3.0/dist/js/bootstrap.bundle.min.js"></script>
</body>
</html>
